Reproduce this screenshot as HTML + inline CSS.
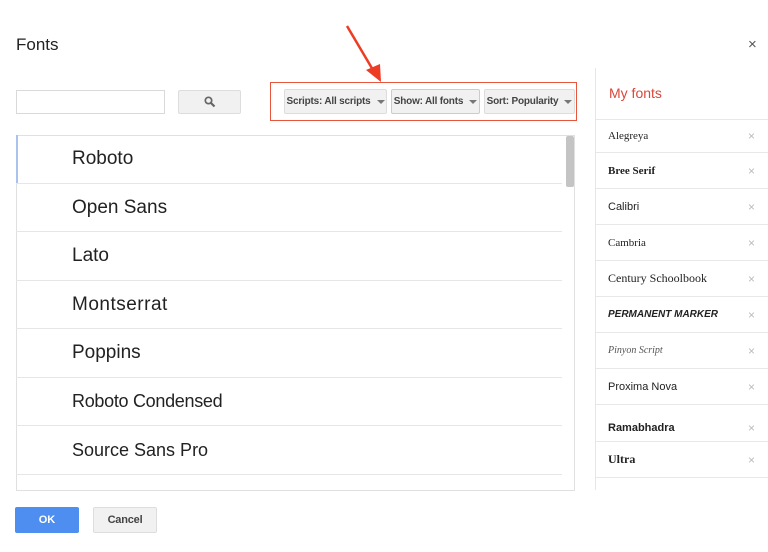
<!DOCTYPE html>
<html><head><meta charset="utf-8"><style>
*{box-sizing:border-box;margin:0;padding:0}
body{width:768px;height:552px;background:#fff;font-family:"Liberation Sans",sans-serif;position:relative;overflow:hidden;color:#222}
.a{position:absolute}
.btn{position:absolute;background:#f1f1f1;border:1px solid #ddd;border-radius:2px;font-size:10px;font-weight:bold;color:#444;display:flex;align-items:center;justify-content:center;white-space:nowrap;letter-spacing:-0.2px}
.caret{display:inline-block;width:0;height:0;border-left:4px solid transparent;border-right:4px solid transparent;border-top:4px solid #777;margin-left:6px}
.row{position:absolute;left:16px;width:546px;border-bottom:1px solid #e6e6e6;font-size:19px;padding-left:56px;display:flex;align-items:center;color:#222}
.mf{position:absolute;left:596px;width:172px;border-bottom:1px solid #e8e8e8;font-size:11px;padding-left:12px;display:flex;align-items:center;color:#222;white-space:nowrap}
.mf span{position:absolute;right:13px;color:#bbb;font-size:12px;font-weight:normal;font-style:normal;font-family:"Liberation Sans",sans-serif}
</style></head><body>
<div class="a" style="left:16px;top:35px;font-size:17px;color:#222">Fonts</div>
<div class="a" style="left:748px;top:36px;font-size:15px;color:#555">×</div>
<svg class="a" style="left:0;top:0" width="768" height="552"><line x1="347" y1="26" x2="373" y2="70" stroke="#ee3b24" stroke-width="2.5"/><polygon points="366,70 381,82 380,64" fill="#ee3b24"/></svg>
<div class="a" style="left:16px;top:90px;width:149px;height:24px;border:1px solid #d9d9d9"></div>
<div class="btn" style="left:178px;top:90px;width:63px;height:24px"><svg width="12" height="12" viewBox="0 0 12 12"><circle cx="4.5" cy="4.5" r="3.2" fill="none" stroke="#666" stroke-width="1.7"/><line x1="7" y1="7" x2="10.5" y2="10.5" stroke="#666" stroke-width="2.2"/></svg></div>
<div class="a" style="left:270px;top:82px;width:307px;height:39px;border:1.5px solid #e8553d"></div>
<div class="btn" style="left:284px;top:89px;width:103px;height:25px">Scripts: All scripts<i class="caret"></i></div>
<div class="btn" style="left:391px;top:89px;width:89px;height:25px;border-color:#ccc">Show: All fonts<i class="caret"></i></div>
<div class="btn" style="left:484px;top:89px;width:91px;height:25px">Sort: Popularity<i class="caret"></i></div>
<div class="a" style="left:16px;top:135px;width:559px;height:356px;border:1px solid #e0e0e0"></div>
<div class="a" style="left:16px;top:135px;width:2px;height:49px;background:#a9c3ee"></div>
<div class="a" style="left:566px;top:136px;width:8px;height:51px;background:#c4c4c4;border-radius:2px"></div>
<div class="row" style="top:135px;height:49px">Roboto</div>
<div class="row" style="top:184px;height:48px">Open Sans</div>
<div class="row" style="top:232px;height:49px">Lato</div>
<div class="row" style="top:281px;height:48px;letter-spacing:0.5px">Montserrat</div>
<div class="row" style="top:329px;height:49px">Poppins</div>
<div class="row" style="top:378px;height:48px;font-size:18px;letter-spacing:-0.3px">Roboto Condensed</div>
<div class="row" style="top:426px;height:49px;font-size:18px">Source Sans Pro</div>
<div class="a" style="left:595px;top:68px;width:1px;height:422px;background:#e6e6e6"></div>
<div class="a" style="left:609px;top:85px;font-size:14px;color:#d9473b">My fonts</div>
<div class="a" style="left:596px;top:119px;width:172px;height:1px;background:#e8e8e8"></div>
<div class="mf" style="top:120px;height:33px;font-family:'Liberation Serif',serif">Alegreya<span>×</span></div>
<div class="mf" style="top:153px;height:36px;font-family:'Liberation Serif',serif;font-weight:bold">Bree Serif<span>×</span></div>
<div class="mf" style="top:189px;height:36px">Calibri<span>×</span></div>
<div class="mf" style="top:225px;height:36px;font-family:'Liberation Serif',serif">Cambria<span>×</span></div>
<div class="mf" style="top:261px;height:36px;font-family:'Liberation Serif',serif;font-size:12px">Century Schoolbook<span>×</span></div>
<div class="mf" style="top:297px;height:36px;font-weight:bold;font-style:italic;font-size:10px">PERMANENT MARKER<span>×</span></div>
<div class="mf" style="top:333px;height:36px;font-family:'Liberation Serif',serif;font-style:italic;font-size:10px;color:#555">Pinyon Script<span>×</span></div>
<div class="mf" style="top:369px;height:36px">Proxima Nova<span>×</span></div>
<div class="mf" style="top:405px;height:37px;font-weight:bold;padding-top:10px">Ramabhadra<span>×</span></div>
<div class="mf" style="top:442px;height:36px;font-family:'Liberation Serif',serif;font-weight:900;font-size:12px">Ultra<span>×</span></div>
<div class="a" style="left:15px;top:507px;width:64px;height:26px;background:#4d8ef0;border-radius:2px;color:#fff;font-size:11px;font-weight:bold;display:flex;align-items:center;justify-content:center">OK</div>
<div class="btn" style="left:93px;top:507px;width:64px;height:26px;font-size:11px">Cancel</div>
</body></html>
